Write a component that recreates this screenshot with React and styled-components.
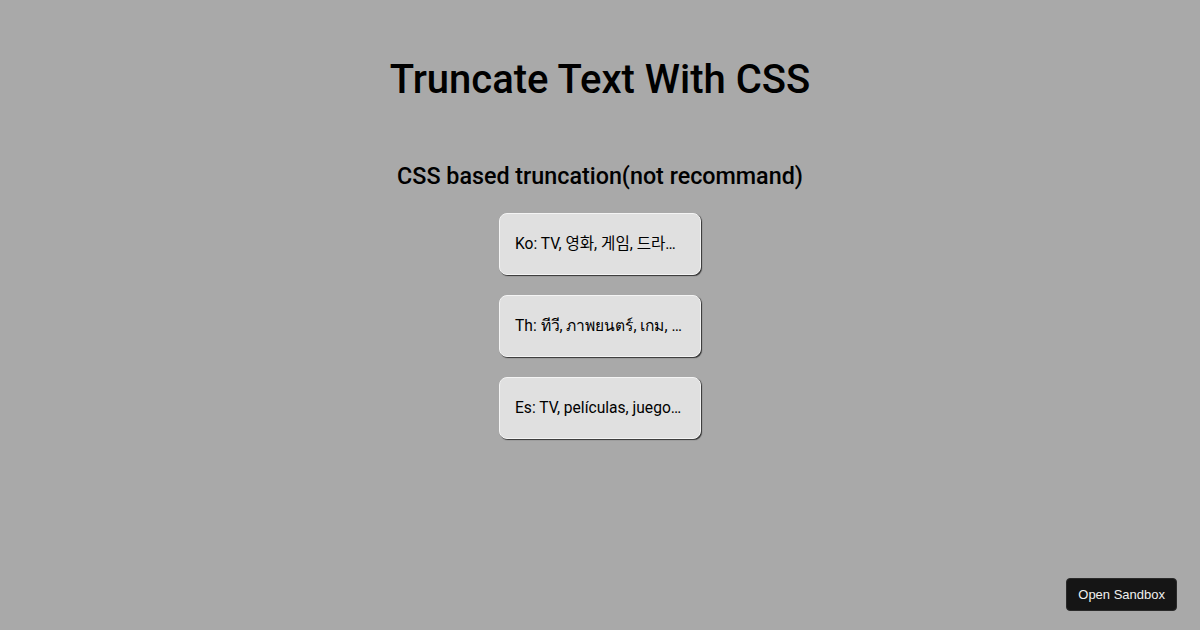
import styled, { createGlobalStyle } from "styled-components";

const GlobalStyle = createGlobalStyle`
  html, body {
    margin: 0;
    padding: 0;
    background: #a9a9a9;
    font-family: Roboto, "Noto Sans CJK KR", "Noto Sans", sans-serif;
  }
`;

const items = [
  { lang: "Ko", text: "TV, 영화, 게임, 드라마, 음악 방송" },
  { lang: "Th", text: "ทีวี, ภาพยนตร์, เกม, เพลง, กีฬา" },
  { lang: "Es", text: "TV, películas, juegos, música" },
];

export default function App() {
  return (
    <Page>
      <GlobalStyle />
      <Title>Truncate Text With CSS</Title>
      <Subtitle>CSS based truncation(not recommand)</Subtitle>
      <List>
        {items.map((item) => (
          <Card key={item.lang}>
            {item.lang}: {item.text}
          </Card>
        ))}
      </List>
      <SandboxButton>Open Sandbox</SandboxButton>
    </Page>
  );
}

const Page = styled.div`
  width: 1200px;
  height: 630px;
  box-sizing: border-box;
  padding-top: 56px;
  display: flex;
  flex-direction: column;
  align-items: center;
  position: relative;
  color: #000;
`;

const Title = styled.h1`
  margin: 0;
  font-size: 40px;
  font-weight: 500;
  line-height: 48px;
`;

const Subtitle = styled.h2`
  margin: 57px 0 22px;
  font-size: 23.3px;
  font-weight: 500;
  line-height: 30px;
`;

const List = styled.div`
  display: flex;
  flex-direction: column;
  gap: 20px;
`;

const Card = styled.div`
  width: 202px;
  height: 62px;
  box-sizing: border-box;
  padding: 0 15px;
  border: 1px solid #f4f4f4;
  border-radius: 8px;
  background: #e0e0e0;
  box-shadow: 1px 1px 1px #333;
  font-size: 15.6px;
  line-height: 60px;
  white-space: nowrap;
  overflow: hidden;
  text-overflow: ellipsis;
  text-align: center;
`;

const SandboxButton = styled.button`
  position: absolute;
  right: 23px;
  bottom: 19px;
  height: 33px;
  padding: 0 11px;
  border: 1px solid #2a2a2a;
  border-radius: 4px;
  background: #151515;
  color: #f0f0f0;
  font-family: "Liberation Sans", Arial, sans-serif;
  font-size: 13px;
  cursor: pointer;
`;
